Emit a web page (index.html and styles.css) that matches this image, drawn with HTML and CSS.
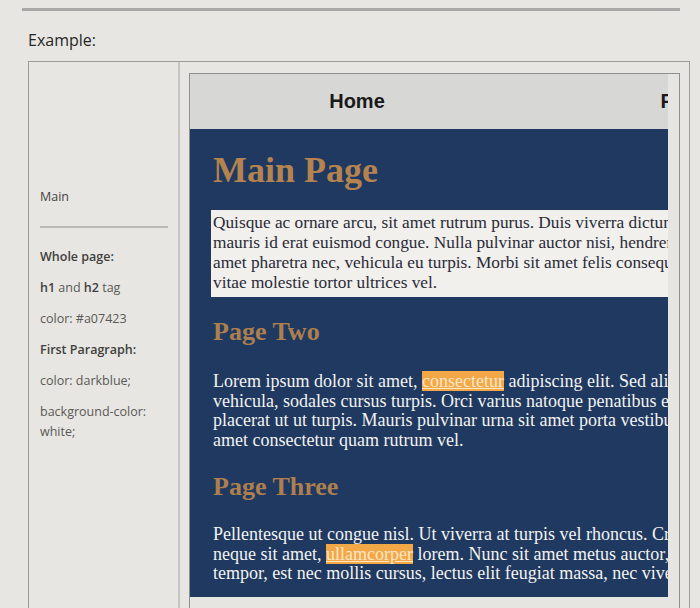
FILE: index.html
```html
<!DOCTYPE html>
<html>
<head>
<meta charset="utf-8">
<link rel="stylesheet" href="styles.css">
</head>
<body>
<div class="topline"></div>
<div class="title">Example:</div>
<div class="example">
  <div class="notes">
    <p class="note main">Main</p>
    <div class="rule"></div>
    <p class="note label">Whole page:</p>
    <p class="note"><b>h1</b> and <b>h2</b> tag</p>
    <p class="note">color: #a07423</p>
    <p class="note label">First Paragraph:</p>
    <p class="note">color: darkblue;</p>
    <p class="note">background-color:<br>white;</p>
  </div>
  <div class="preview">
    <div class="frame">
      <div class="viewport">
        <nav class="nav">
          <div class="nav-item">Home</div>
          <div class="nav-item">Forms</div>
        </nav>
        <div class="page">
          <h1 class="h1">Main Page</h1>
          <p class="first">Quisque ac ornare arcu, sit amet rutrum purus. Duis viverra dictum<br>mauris id erat euismod congue. Nulla pulvinar auctor nisi, hendrerit<br>amet pharetra nec, vehicula eu turpis. Morbi sit amet felis consequat,<br>vitae molestie tortor ultrices vel.</p>
          <h2 class="h2 two">Page Two</h2>
          <p class="body p2">Lorem ipsum dolor sit amet, <span class="mark">consectetur</span> adipiscing elit. Sed aliquam<br>vehicula, sodales cursus turpis. Orci varius natoque penatibus et<br>placerat ut ut turpis. Mauris pulvinar urna sit amet porta vestibulum<br>amet consectetur quam rutrum vel.</p>
          <h2 class="h2 three">Page Three</h2>
          <p class="body p3">Pellentesque ut congue nisl. Ut viverra at turpis vel rhoncus. Cras<br>neque sit amet, <span class="mark">ullamcorper</span> lorem. Nunc sit amet metus auctor,<br>tempor, est nec mollis cursus, lectus elit feugiat massa, nec viverra</p>
        </div>
      </div>
    </div>
  </div>
</div>
</body>
</html>
```
FILE: styles.css
```css
html, body {
  margin: 0;
  padding: 0;
}
body {
  background: #e8e6e2;
  width: 700px;
  height: 608px;
  overflow: hidden;
  font-family: "Open Sans", "Noto Sans", sans-serif;
}
.topline {
  margin: 8px 20px 0 22px;
  height: 3px;
  background: #a9a8a6;
}
.title {
  margin: 17px 0 0 28px;
  font-size: 16px;
  line-height: 24px;
  color: #262626;
}
.example {
  margin: 9px 10px 0 28px;
  height: 548px;
  border: 1px solid #9c9b99;
  border-bottom: none;
  display: grid;
  grid-template-columns: 151px 1fr;
}
.notes {
  border-right: 2px solid #c5c4c1;
  padding: 125px 12px 0 11px;
}
.note {
  margin: 0 0 11px;
  font-size: 12.5px;
  line-height: 20px;
  color: #5a5956;
}
.note b, .note.label {
  font-weight: 600;
  color: #403f3d;
}
.note.main {
  color: #44433f;
  margin-bottom: 0;
}
.rule {
  height: 2px;
  background: #b9b8b5;
  margin: 19px 0 19px;
  width: 128px;
}
.preview {
  padding: 11px 0 0 9px;
}
.frame {
  width: 478px;
  padding-right: 11px;
  height: 540px;
  border: 1px solid #8f8f8f;
  border-bottom: none;
  background: #e6e5e2;
}
.viewport {
  width: 478px;
  overflow: hidden;
}
.nav {
  display: flex;
  background: #d7d7d6;
  height: 55px;
  white-space: nowrap;
}
.nav-item {
  flex: 0 0 334px;
  text-align: center;
  font-family: "Liberation Sans", Arial, sans-serif;
  font-weight: bold;
  font-size: 20px;
  line-height: 55px;
  color: #1a1a1a;
}
.page {
  background: #1f3961;
  padding: 21px 0 13px 23px;
  font-family: "Liberation Serif", "Times New Roman", serif;
  white-space: nowrap;
}
.h1 {
  margin: 0;
  font-size: 36px;
  line-height: 40px;
  color: #b4834f;
}
.first {
  margin: 20px 0 0 -2px;
  padding: 3px 0 4px 2px;
  background: #f1f0ed;
  color: #2a2b38;
  font-size: 17.3px;
  line-height: 20px;
}
.h2 {
  margin: 0;
  font-size: 26px;
  line-height: 30px;
  color: #ad7f4e;
}
.h2.two { margin-top: 20px; }
.h2.three { margin-top: 22px; }
.body {
  margin: 25px 0 0;
  color: #f4f3f0;
  font-size: 18px;
  line-height: 19.5px;
}
.body.p3 { margin-top: 23px; }
.mark {
  background: #f3a848;
  color: #fbe6c6;
  text-decoration: underline;
}
```
